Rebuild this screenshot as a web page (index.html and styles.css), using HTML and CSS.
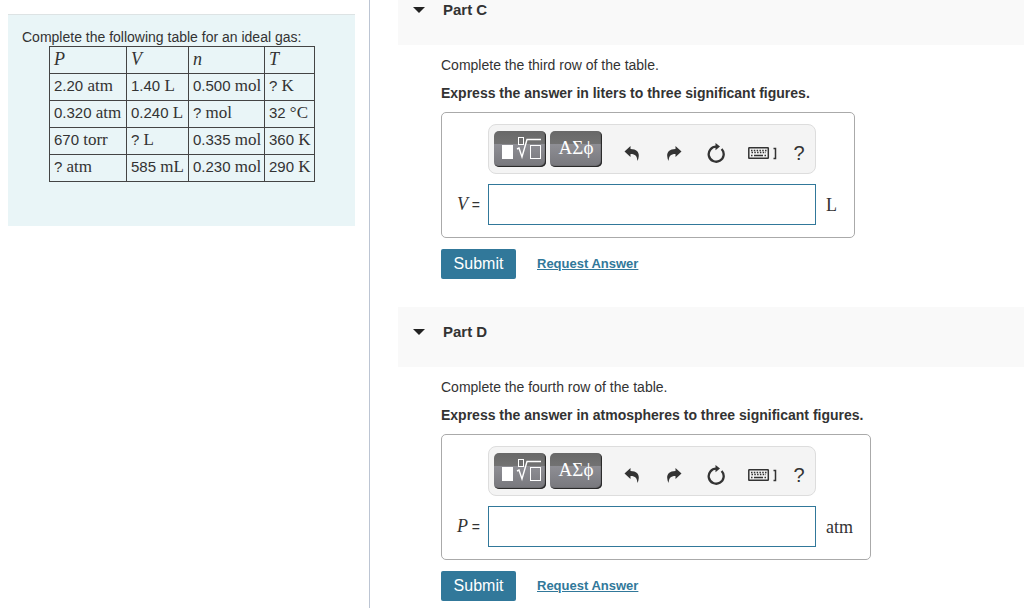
FILE: index.html
```html
<!DOCTYPE html>
<html lang="en">
<head>
    <meta charset="utf-8">
    <title>Ideal gas table</title>
    <link rel="stylesheet" href="styles.css">
</head>
<body>
    <svg class="icon-defs" aria-hidden="true">
        <symbol id="icon-template" viewBox="0 0 52 36">
            <rect x="8" y="14" width="11" height="14" fill="#fff"/>
            <rect x="24.5" y="6.5" width="5" height="7" fill="none" stroke="#fff"/>
            <path d="M23 18 L25 17 L28 26 L33 8.5 H47" fill="none" stroke="#fff" stroke-width="1.4"/>
            <rect x="36.5" y="14.5" width="10" height="13" fill="none" stroke="#fff"/>
        </symbol>
        <symbol id="icon-undo" viewBox="0 0 16 16">
            <path d="M0.5 6.5 L6.5 1 V4 C12.5 4 15 7 14.8 11 Q14.7 13.5 13.3 16 C13.3 11.5 11.5 9 6.5 9 V12 Z"/>
        </symbol>
        <symbol id="icon-redo" viewBox="0 0 16 16">
            <path d="M15.5 6.5 L9.5 1 V4 C3.5 4 1 7 1.2 11 Q1.3 13.5 2.7 16 C2.7 11.5 4.5 9 9.5 9 V12 Z"/>
        </symbol>
        <symbol id="icon-reset" viewBox="0 0 20 20">
            <path d="M10.5 3.7 A7.5 7.5 0 1 0 15.6 6" fill="none" stroke="currentColor" stroke-width="2.3"/>
            <path d="M9.5 0 L14 3.6 L9.5 7.2 Z"/>
        </symbol>
        <symbol id="icon-keyboard" viewBox="0 0 29 14">
            <rect x="0.8" y="1.8" width="19.5" height="10.5" rx="0.5" fill="none" stroke="currentColor" stroke-width="1.5"/>
            <path d="M3 4.5 H18.5 M3.5 6.5 H18" stroke="currentColor" stroke-width="1.5" stroke-dasharray="1.5 1.3"/>
            <path d="M3 9.5 H4.5 M6 9.5 H15 M16.5 9.5 H18" stroke="currentColor" stroke-width="1.4"/>
            <path d="M25.500 2.5 H27.5 V12.5 H25.500" fill="none" stroke="currentColor" stroke-width="1.5"/>
        </symbol>
    </svg>

    <div class="page">
        <aside class="sidebar">
            <div class="problem">
                <p class="problem-text">Complete the following table for an ideal gas:</p>
                <table class="gas-table">
                    <tr>
                        <th class="col-p"><i>P</i></th>
                        <th class="col-v"><i>V</i></th>
                        <th class="col-n"><i>n</i></th>
                        <th class="col-t"><i>T</i></th>
                    </tr>
                    <tr>
                        <td>2.20 <span class="unit">atm</span></td>
                        <td>1.40 <span class="unit">L</span></td>
                        <td>0.500 <span class="unit">mol</span></td>
                        <td>? <span class="unit">K</span></td>
                    </tr>
                    <tr>
                        <td>0.320 <span class="unit">atm</span></td>
                        <td>0.240 <span class="unit">L</span></td>
                        <td>? <span class="unit">mol</span></td>
                        <td>32 <span class="unit">°C</span></td>
                    </tr>
                    <tr>
                        <td>670 <span class="unit">torr</span></td>
                        <td>? <span class="unit">L</span></td>
                        <td>0.335 <span class="unit">mol</span></td>
                        <td>360 <span class="unit">K</span></td>
                    </tr>
                    <tr>
                        <td>? <span class="unit">atm</span></td>
                        <td>585 <span class="unit">mL</span></td>
                        <td>0.230 <span class="unit">mol</span></td>
                        <td>290 <span class="unit">K</span></td>
                    </tr>
                </table>
            </div>
        </aside>

        <main class="parts">
            <section class="part">
                <h2 class="part-header"><span class="part-arrow"></span>Part C</h2>
                <div class="part-body">
                    <p class="part-text">Complete the third row of the table.</p>
                    <p class="part-text part-hint">Express the answer in liters to three significant figures.</p>
                    <div class="answer">
                        <div class="toolbar">
                            <button class="math-button" type="button" aria-label="Templates"><svg width="52" height="36"><use href="#icon-template"/></svg></button>
                            <button class="math-button" type="button">ΑΣϕ</button>
                            <button class="tool-button tool-undo" type="button" aria-label="Undo"><svg width="16" height="16"><use href="#icon-undo"/></svg></button>
                            <button class="tool-button" type="button" aria-label="Redo"><svg width="16" height="16"><use href="#icon-redo"/></svg></button>
                            <button class="tool-button" type="button" aria-label="Reset"><svg width="20" height="20"><use href="#icon-reset"/></svg></button>
                            <button class="tool-button tool-keyboard" type="button" aria-label="Keyboard shortcuts"><svg width="29" height="14"><use href="#icon-keyboard"/></svg></button>
                            <button class="tool-button tool-help" type="button">?</button>
                        </div>
                        <label class="answer-label" for="answerC"><i>V</i> =</label>
                        <input class="answer-input" type="text" id="answerC">
                        <span class="answer-unit">L</span>
                    </div>
                    <div class="actions">
                        <button class="submit-button" type="button">Submit</button>
                        <a class="request-link" href="#">Request Answer</a>
                    </div>
                </div>
            </section>

            <section class="part">
                <h2 class="part-header"><span class="part-arrow"></span>Part D</h2>
                <div class="part-body">
                    <p class="part-text">Complete the fourth row of the table.</p>
                    <p class="part-text part-hint">Express the answer in atmospheres to three significant figures.</p>
                    <div class="answer">
                        <div class="toolbar">
                            <button class="math-button" type="button" aria-label="Templates"><svg width="52" height="36"><use href="#icon-template"/></svg></button>
                            <button class="math-button" type="button">ΑΣϕ</button>
                            <button class="tool-button tool-undo" type="button" aria-label="Undo"><svg width="16" height="16"><use href="#icon-undo"/></svg></button>
                            <button class="tool-button" type="button" aria-label="Redo"><svg width="16" height="16"><use href="#icon-redo"/></svg></button>
                            <button class="tool-button" type="button" aria-label="Reset"><svg width="20" height="20"><use href="#icon-reset"/></svg></button>
                            <button class="tool-button tool-keyboard" type="button" aria-label="Keyboard shortcuts"><svg width="29" height="14"><use href="#icon-keyboard"/></svg></button>
                            <button class="tool-button tool-help" type="button">?</button>
                        </div>
                        <label class="answer-label" for="answerD"><i>P</i> =</label>
                        <input class="answer-input" type="text" id="answerD">
                        <span class="answer-unit">atm</span>
                    </div>
                    <div class="actions">
                        <button class="submit-button" type="button">Submit</button>
                        <a class="request-link" href="#">Request Answer</a>
                    </div>
                </div>
            </section>
        </main>
    </div>
</body>
</html>
```
FILE: styles.css
```css
* {
    box-sizing: border-box;
}

body {
    margin: 0;
    background: #fff;
    color: #333;
    font-family: "Liberation Sans", Arial, sans-serif;
    font-size: 14px;
    line-height: 20px;
}

p, h2 {
    margin: 0;
}

.icon-defs {
    display: none;
}

.page {
    display: flex;
    min-height: 100vh;
}

.sidebar {
    flex: 0 0 370px;
    padding: 14px 14px 0 8px;
    border-right: 1px solid #bcc5d3;
}

.problem {
    padding: 12px 14px 44px;
    background: #e9f5f7;
    border-top: 1px solid #dde3e4;
}

.gas-table {
    width: 265px;
    margin-left: 27px;
    margin-top: -1px;
    border-collapse: collapse;
    table-layout: fixed;
}

.gas-table th,
.gas-table td {
    height: 27px;
    padding: 0 0 2px 4px;
    border: 1px solid #444;
    text-align: left;
    font-weight: normal;
    white-space: nowrap;
}

.gas-table td {
    font-size: 15px;
}

.col-p {
    width: 77px;
}

.col-v {
    width: 62px;
}

.col-n {
    width: 76px;
}

.col-t {
    width: 50px;
}

.gas-table i,
.unit,
.answer-label i,
.answer-unit {
    font-family: "Liberation Serif", "Times New Roman", serif;
    font-size: 18px;
}

.gas-table .unit {
    font-size: 17px;
}

.parts {
    flex: 1;
    margin-top: -15px;
    padding-left: 28px;
}

.part-header {
    display: flex;
    align-items: center;
    height: 60px;
    padding-left: 15px;
    padding-bottom: 10px;
    background: #f9f9f9;
    font-size: 15px;
}

.part-arrow {
    margin-right: 18px;
    border: 6px solid transparent;
    border-top-color: #222;
    border-bottom: 0;
}

.part-body {
    padding: 10px 10px 28px 43px;
}

.part-hint {
    margin-top: 8px;
    font-weight: bold;
}

.answer {
    display: inline-grid;
    grid-template-columns: 38px 328px auto;
    column-gap: 8px;
    row-gap: 10px;
    align-items: center;
    margin-top: 9px;
    padding: 11px 17px 12px 0;
    border: 1px solid #aaa;
    border-radius: 5px;
    vertical-align: top;
}

.toolbar {
    grid-column: 2;
    display: flex;
    align-items: center;
    height: 50px;
    padding-left: 5px;
    border: 1px solid #ddd;
    border-radius: 8px;
    background: #f4f4f4;
}

.math-button {
    flex-shrink: 0;
    width: 52px;
    height: 36px;
    margin-right: 4px;
    padding: 0 0 2px;
    border: 0;
    border-radius: 5px;
    background: linear-gradient(#686868, #727272 36%, #8e8e94 37%, #77777c);
    box-shadow: inset -1px -1px 1px #222;
    color: #fff;
    font-family: "Liberation Serif", "Times New Roman", serif;
    font-size: 19px;
}

.math-button svg {
    display: block;
}

.tool-button {
    display: flex;
    flex-shrink: 0;
    align-items: center;
    justify-content: center;
    width: 42px;
    height: 36px;
    padding: 8px 0 0;
    border: 0;
    background: none;
    color: #333;
}

.tool-button svg {
    fill: currentColor;
}

.tool-undo {
    margin-left: 5px;
}

.tool-keyboard {
    width: 46px;
    margin-left: 2px;
}

.tool-help {
    width: 28px;
    font-family: "Liberation Sans", Arial, sans-serif;
    font-size: 20px;
}

.answer-label {
    grid-column: 1;
    text-align: right;
}

.answer-input {
    grid-column: 2;
    width: 100%;
    height: 41px;
    padding: 0 8px;
    border: 1px solid #31789a;
    background: #fff;
    font-size: 18px;
}

.answer-unit {
    margin-left: 2px;
}

.actions {
    display: flex;
    align-items: center;
    margin-top: 11px;
}

.submit-button {
    width: 75px;
    height: 30px;
    padding: 0;
    border: 0;
    border-radius: 2px;
    background: #31789a;
    color: #fff;
    font-family: "Liberation Sans", Arial, sans-serif;
    font-size: 16px;
}

.request-link {
    margin-left: 21px;
    color: #31789a;
    font-size: 13px;
    font-weight: bold;
}
```
